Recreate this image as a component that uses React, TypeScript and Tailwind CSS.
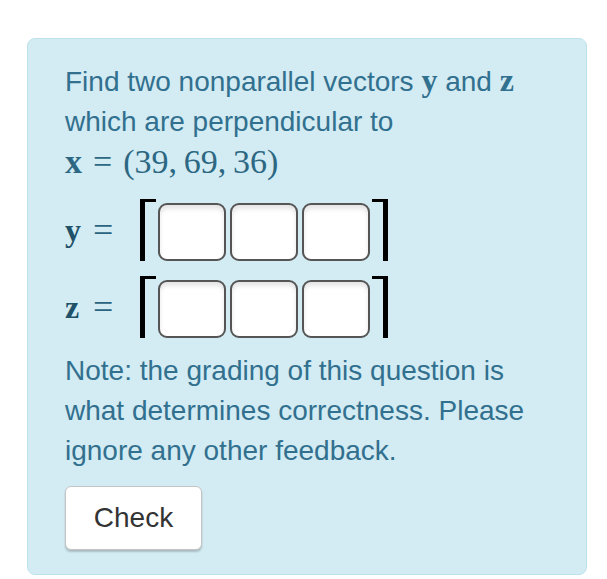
import React from "react"

const serif = { fontFamily: '"Liberation Serif", "Times New Roman", serif' }

function VectorRow({ label }: { label: string }) {
  return (
    <div className="flex items-center h-[62px]">
      <span className="w-[28px] text-[32px] font-bold text-[#1f5268] leading-none" style={serif}>
        {label}
      </span>
      <span className="w-[47px] text-[36px] text-[#2a6480] leading-none" style={serif}>
        =
      </span>
      <div className="flex items-end h-[62px]">
        <div className="w-[16px] h-[62px] border-l-[5px] border-t-[3px] border-black mr-[2px]"></div>
        <div className="flex gap-[4px]">
          {[0, 1, 2].map((i) => (
            <div
              key={i}
              className="w-[68px] h-[58px] rounded-[9px] border-2 border-[#555] bg-white shadow-[inset_0_4px_4px_rgba(0,0,0,0.10)]"
            ></div>
          ))}
        </div>
        <div className="w-[16px] h-[62px] border-r-[5px] border-t-[3px] border-black ml-[2px]"></div>
      </div>
    </div>
  )
}

export default function App() {
  return (
    <div className="min-h-screen bg-white pt-[38px] pl-[27px] pr-[20px] pb-[6px]">
      <div
        className="rounded-[8px] border border-[#bce3ec] bg-[#d3ebf2] pl-[37px] pt-[21px] pb-[24px] text-[#31708f]"
        style={{ fontFamily: '"Liberation Sans", Arial, sans-serif' }}
      >
        <p className="text-[28px] leading-[40px]">
          Find two nonparallel vectors{" "}
          <b className="text-[32px]" style={serif}>y</b> and{" "}
          <b className="text-[32px]" style={serif}>z</b>
          <br />
          which are perpendicular to
          <br />
          <span className="text-[34px] text-[#2c6883]" style={serif}>
            <b>x</b>
            <span className="mx-[11px]">=</span>(39,&thinsp;69,&thinsp;36)
          </span>
        </p>

        <div className="mt-[15px] flex flex-col gap-[15px]">
          <VectorRow label="y" />
          <VectorRow label="z" />
        </div>

        <p className="mt-[13px] text-[28px] leading-[40px]">
          Note: the grading of this question is
          <br />
          what determines correctness. Please
          <br />
          ignore any other feedback.
        </p>

        <button className="mt-[15px] w-[137px] h-[64px] rounded-[6px] border border-[#c4c4c4] bg-white text-[28px] text-[#333] shadow-[0_2px_2px_rgba(0,0,0,0.2)]">
          Check
        </button>
      </div>
    </div>
  )
}
